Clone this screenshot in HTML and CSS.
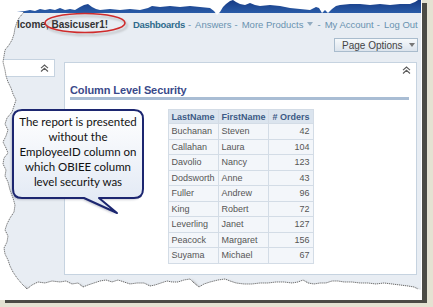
FILE: index.html
```html
<!DOCTYPE html>
<html>
<head>
<meta charset="utf-8">
<link rel="stylesheet" href="styles.css">
</head>
<body>
<div class="frame">
  <div class="shot">
    <div class="banner"></div>
    <div class="header">
      <div class="toprow">
        <span class="welcome">lcome, Basicuser1!</span>
        <nav class="links">
          <a class="dash">Dashboards</a><span class="sep">-</span><a>Answers</a><span class="sep">-</span><a>More Products</a><span class="caret"></span><span class="sep">-</span><a>My Account</a><span class="sep">-</span><a>Log Out</a>
        </nav>
      </div>
      <div class="optrow">
        <div class="page-options">Page Options <span class="btn-caret"></span></div>
      </div>
    </div>
    <div class="content">
      <div class="left-panel">
        <svg class="collapse" width="9" height="8" viewBox="0 0 9 8"><path d="M1 4.2 L4.5 1 L8 4.2 M1 7.5 L4.5 4.3 L8 7.5" fill="none" stroke="#5a5a5a" stroke-width="1.1"/></svg>
      </div>
      <div class="main-panel">
        <div class="panel-top">
          <svg class="collapse" width="9" height="8" viewBox="0 0 9 8"><path d="M1 4.2 L4.5 1 L8 4.2 M1 7.5 L4.5 4.3 L8 7.5" fill="none" stroke="#5a5a5a" stroke-width="1.1"/></svg>
        </div>
        <h2 class="title">Column Level Security</h2>
        <div class="rule"></div>
        <table class="report">
          <colgroup><col class="c1"><col class="c2"><col class="c3"></colgroup>
          <thead>
            <tr><th>LastName</th><th>FirstName</th><th class="num"># Orders</th></tr>
          </thead>
          <tbody>
            <tr><td>Buchanan</td><td>Steven</td><td class="num">42</td></tr>
            <tr><td>Callahan</td><td>Laura</td><td class="num">104</td></tr>
            <tr><td>Davolio</td><td>Nancy</td><td class="num">123</td></tr>
            <tr><td>Dodsworth</td><td>Anne</td><td class="num">43</td></tr>
            <tr><td>Fuller</td><td>Andrew</td><td class="num">96</td></tr>
            <tr><td>King</td><td>Robert</td><td class="num">72</td></tr>
            <tr><td>Leverling</td><td>Janet</td><td class="num">127</td></tr>
            <tr><td>Peacock</td><td>Margaret</td><td class="num">156</td></tr>
            <tr><td>Suyama</td><td>Michael</td><td class="num">67</td></tr>
          </tbody>
        </table>
      </div>
    </div>
  </div>

  <svg class="overlay" width="422" height="300" viewBox="0 0 422 300">
    <defs>
      <filter id="blur" x="-10%" y="-50%" width="120%" height="200%"><feGaussianBlur stdDeviation="1.6"/></filter>
      <filter id="soft" x="-20%" y="-20%" width="140%" height="140%"><feGaussianBlur stdDeviation="1"/></filter>
      <linearGradient id="bubble" x1="0" y1="0" x2="0" y2="1">
        <stop offset="0" stop-color="#ffffff"/>
        <stop offset="1" stop-color="#dfe7f3"/>
      </linearGradient>
    </defs>
    <path fill="#fff" d="M0 0 L422 0 L420 0 L418 0 L415 2 L410 4 L400 4 L390 5 L380 4 L370 5 L360 4 L350 4 L340 5 L336 6 L332 9 L328 13 L325 10 L322 13 L319 8 L316 7 L310 10 L300 9 L290 8 L280 6 L270 5 L260 6 L255 5 L250 3 L245 5 L240 4 L236 2 L233 0 L230 1 L226 4 L223 7 L220 12 L217 15 L214 11 L210 8 L200 7 L190 6 L180 7 L170 6 L160 7 L152 6 L148 8 L140 10 L130 9 L120 10 L110 9 L100 10 L96 9 L92 7 L88 4 L84 5 L80 7 L75 10 L70 9 L65 10 L60 8 L55 10 L50 9 L45 10 L40 9 L35 11 L30 10 L25 11 L0 14 Z"/>
    <path fill="none" stroke="#7a7a7a" stroke-width="4" filter="url(#blur)" transform="translate(1 4)" d="M22 284 L27 289 L32 285 L38 282 L45 283 L52 281 L60 282 L66 281 L72 284 L78 283 L83 287 L88 285 L94 283 L100 281 L106 280 L112 282 L118 280 L124 282 L130 284 L137 283 L144 283 L150 286 L155 285 L161 283 L167 281 L172 282 L178 282 L184 280 L190 279 L194 283 L199 287 L204 284 L210 282 L218 280 L225 279 L230 281 L236 283 L244 284 L252 284 L260 283 L268 283 L276 282 L284 282 L292 283 L298 282 L303 280 L308 283 L314 284 L320 283 L326 283 L332 281 L338 281 L344 282 L352 282 L360 283 L368 283 L376 284 L384 283 L392 284 L400 285 L408 286 L414 287 L418 289"/>
    <path fill="#fff" d="M0 12 L24 12 L19 18 L17 22 L15 28 L14 34 L12 40 L9 45 L5 50 L4 56 L3 62 L5 70 L6 76 L8 82 L11 88 L13 94 L16 100 L14 106 L12 112 L7 118 L5 124 L8 130 L6 136 L3 142 L6 148 L8 153 L4 158 L3 164 L6 170 L5 176 L8 182 L10 190 L13 198 L15 205 L14 212 L10 218 L7 224 L5 230 L8 236 L7 242 L4 248 L5 254 L8 260 L10 266 L13 272 L17 278 L22 284 L27 289 L32 285 L38 282 L45 283 L52 281 L60 282 L66 281 L72 284 L78 283 L83 287 L88 285 L94 283 L100 281 L106 280 L112 282 L118 280 L124 282 L130 284 L137 283 L144 283 L150 286 L155 285 L161 283 L167 281 L172 282 L178 282 L184 280 L190 279 L194 283 L199 287 L204 284 L210 282 L218 280 L225 279 L230 281 L236 283 L244 284 L252 284 L260 283 L268 283 L276 282 L284 282 L292 283 L298 282 L303 280 L308 283 L314 284 L320 283 L326 283 L332 281 L338 281 L344 282 L352 282 L360 283 L368 283 L376 284 L384 283 L392 284 L400 285 L408 286 L414 287 L418 289 L422 290 L422 300 L0 300 Z"/>
    <path fill="none" stroke="#4a4a4a" stroke-width="0.8" stroke-dasharray="1.2 0.8" d="M24 12 L19 18 L17 22 L15 28 L14 34 L12 40 L9 45 L5 50 L4 56 L3 62 L5 70 L6 76 L8 82 L11 88 L13 94 L16 100 L14 106 L12 112 L7 118 L5 124 L8 130 L6 136 L3 142 L6 148 L8 153 L4 158 L3 164 L6 170 L5 176 L8 182 L10 190 L13 198 L15 205 L14 212 L10 218 L7 224 L5 230 L8 236 L7 242 L4 248 L5 254 L8 260 L10 266 L13 272 L17 278 L22 284 L27 289 L32 285 L38 282 L45 283 L52 281 L60 282 L66 281 L72 284 L78 283 L83 287 L88 285 L94 283 L100 281 L106 280 L112 282 L118 280 L124 282 L130 284 L137 283 L144 283 L150 286 L155 285 L161 283 L167 281 L172 282 L178 282 L184 280 L190 279 L194 283 L199 287 L204 284 L210 282 L218 280 L225 279 L230 281 L236 283 L244 284 L252 284 L260 283 L268 283 L276 282 L284 282 L292 283 L298 282 L303 280 L308 283 L314 284 L320 283 L326 283 L332 281 L338 281 L344 282 L352 282 L360 283 L368 283 L376 284 L384 283 L392 284 L400 285 L408 286 L414 287 L418 289"/>
    <ellipse cx="86" cy="24" rx="40" ry="9.5" fill="none" stroke="#888" stroke-width="1.6" opacity="0.5" filter="url(#soft)" transform="translate(1 1.5)"/>
    <ellipse cx="85" cy="23" rx="40" ry="9.5" fill="none" stroke="#cf2b2b" stroke-width="1.6"/>
    <path d="M22 110 L134 110 Q143 110 143 119 L143 189 Q143 198 134 198 L99 198 L117 213 L84 198 L22 198 Q13 198 13 189 L13 119 Q13 110 22 110 Z" fill="#6a6f85" opacity="0.45" filter="url(#soft)" transform="translate(-1.5 1.5)"/>
    <path d="M22 110 L134 110 Q143 110 143 119 L143 189 Q143 198 134 198 L99 198 L117 213 L84 198 L22 198 Q13 198 13 189 L13 119 Q13 110 22 110 Z" fill="url(#bubble)" stroke="#1c2670" stroke-width="2" stroke-linejoin="round"/>
  </svg>
  <div class="callout-text">The report is presented<br>without the<br>EmployeeID column on<br>which OBIEE column<br>level security was</div>
</div>
</body>
</html>
```

FILE: styles.css
```css
html, body {
  margin: 0;
  padding: 0;
}
body {
  width: 433px;
  height: 307px;
  overflow: hidden;
  background: #e4e2d2;
  font-family: "Liberation Sans", Arial, sans-serif;
}
.frame {
  position: relative;
  width: 422px;
  height: 300px;
  background: #fff;
  box-shadow: 5px 3px 0 #4b4b45;
  overflow: hidden;
}
.shot {
  width: 421px;
  height: 300px;
  background: #e8edf3;
  display: flex;
  flex-direction: column;
}
.banner {
  flex: none;
  height: 13px;
  background: linear-gradient(#163a84, #2a5ca8);
}
.header {
  flex: none;
  height: 43px;
  box-sizing: border-box;
  padding: 4px 3px 0 17px;
}
.toprow {
  display: flex;
  align-items: center;
  height: 14px;
  font-size: 9.5px;
  white-space: nowrap;
}
.welcome {
  flex: none;
  width: 116px;
  color: #333;
  font-weight: bold;
  font-size: 10px;
}
.links {
  display: flex;
  align-items: center;
  color: #6892b0;
}
.links .dash {
  color: #2f6b8c;
  font-weight: bold;
  letter-spacing: -0.3px;
}
.sep {
  margin: 0 4px 0 3px;
}
.caret {
  margin-left: 4px;
  margin-right: 1px;
  width: 0;
  height: 0;
  border-left: 3px solid transparent;
  border-right: 3px solid transparent;
  border-top: 4px solid #93acc1;
}
.optrow {
  display: flex;
  justify-content: flex-end;
  margin-top: 7px;
}
.page-options {
  display: flex;
  align-items: center;
  box-sizing: border-box;
  width: 84px;
  height: 14px;
  padding-left: 7px;
  font-size: 10px;
  color: #444;
  border: 1px solid #a9bccd;
  background: linear-gradient(#f6f9fb, #dce4ed);
}
.btn-caret {
  margin-left: 6px;
  width: 0;
  height: 0;
  border-left: 3px solid transparent;
  border-right: 3px solid transparent;
  border-top: 4px solid #777;
}
.content {
  flex: 1;
  display: flex;
  align-items: flex-start;
}
.left-panel {
  box-sizing: border-box;
  width: 55px;
  height: 18px;
  margin-top: 3px;
  background: #fff;
  border: 1px solid #c6d3e0;
  border-left: none;
  display: flex;
  justify-content: flex-end;
  align-items: center;
  padding-right: 5px;
}
.main-panel {
  box-sizing: border-box;
  width: 353px;
  height: 213px;
  margin: 6px 0 0 9px;
  background: #fff;
  border: 1px solid #c6d3e0;
}
.panel-top {
  height: 14px;
  display: flex;
  justify-content: flex-end;
  align-items: center;
  padding-right: 5px;
}
.title {
  margin: 7px 0 0 5px;
  font-size: 11px;
  line-height: 13px;
  font-weight: bold;
  letter-spacing: -0.1px;
  color: #3a4a8a;
}
.rule {
  height: 3px;
  margin: 0 7px 0 5px;
  background: #a9bdd4;
}
.report {
  margin: 9px auto 0;
  width: 145px;
  border-collapse: collapse;
  table-layout: fixed;
  font-size: 9px;
}
.report .c1 { width: 50px; }
.report .c2 { width: 50px; }
.report .c3 { width: 45px; }
.report th {
  height: 13px;
  padding: 0 3px;
  text-align: left;
  background: #dbe4ee;
  color: #3c5a86;
  font-weight: bold;
  border: 1px solid #d3dce6;
  white-space: nowrap;
}
.report td {
  height: 14.5px;
  padding: 0 3px;
  background: #f3f6fa;
  color: #555;
  border: 1px solid #d3dce6;
  white-space: nowrap;
}
.report .num {
  text-align: right;
}
.overlay {
  position: absolute;
  left: 0;
  top: 0;
  pointer-events: none;
}
.callout-text {
  position: absolute;
  left: 13px;
  top: 114px;
  width: 130px;
  text-align: center;
  font-family: Lato, "Open Sans", sans-serif;
  font-size: 11.5px;
  line-height: 15px;
  color: #111;
  white-space: nowrap;
}
```
